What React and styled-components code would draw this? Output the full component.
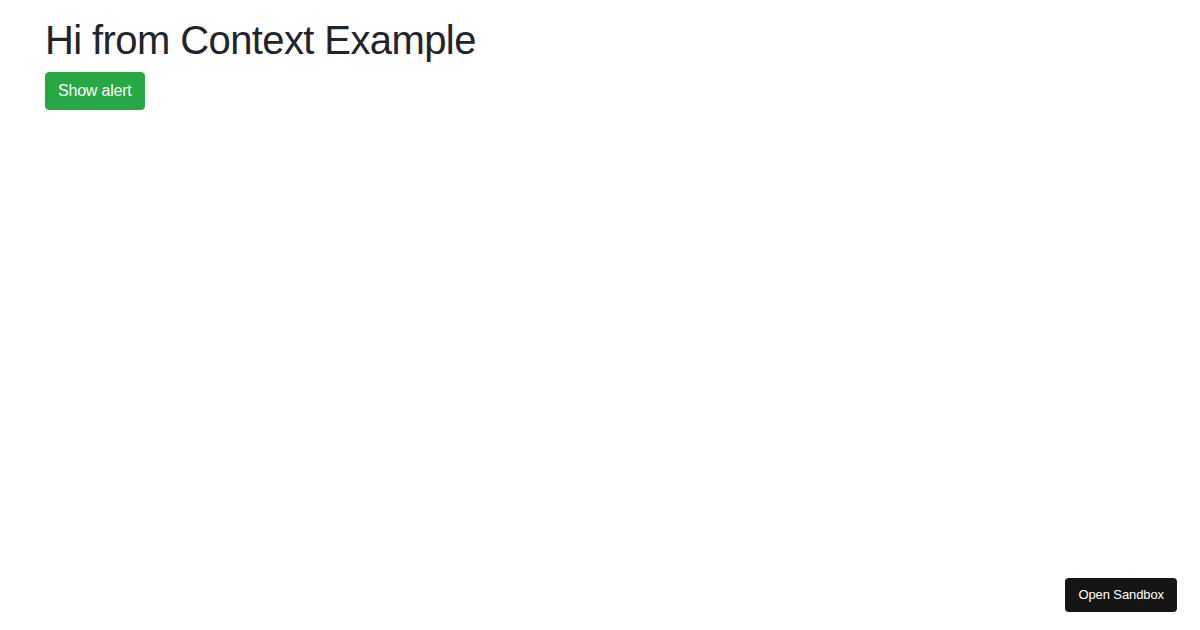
import React from "react";
import styled, { createGlobalStyle } from "styled-components";

const Global = createGlobalStyle`
  html, body { margin: 0; padding: 0; background: #fff; }
  body {
    font-family: "Liberation Sans", Arial, sans-serif;
    color: #212529;
    font-size: 16px;
    line-height: 1.5;
  }
`;

const Container = styled.div`
  max-width: 1140px;
  margin: 0 auto;
  padding: 16px 15px 0;
  box-sizing: border-box;
`;

const Title = styled.h1`
  margin: 0 0 8px;
  font-size: 40px;
  font-weight: 300;
  line-height: 1.2;
  letter-spacing: -0.6px;
  color: #212529;
`;

const Button = styled.button`
  display: inline-block;
  font-family: inherit;
  font-size: 16px;
  line-height: 1.5;
  letter-spacing: -0.2px;
  padding: 6px 12px;
  border: 1px solid ${(p) => p.$bg};
  background: ${(p) => p.$bg};
  color: #fff;
  border-radius: 4px;
  cursor: pointer;
`;

const SandboxLink = styled.a`
  position: fixed;
  right: 23px;
  bottom: 18px;
  background: #151515;
  color: #fff;
  font-family: "Liberation Sans", Arial, sans-serif;
  font-size: 13px;
  line-height: 1;
  letter-spacing: -0.1px;
  padding: 10px 13px 11px;
  border-radius: 4px;
  text-decoration: none;
`;

export default function App() {
  return (
    <>
      <Global />
      <Container>
        <Title>Hi from Context Example</Title>
        <Button $bg="#28a745">Show alert</Button>
      </Container>
      <SandboxLink href="#">Open Sandbox</SandboxLink>
    </>
  );
}
